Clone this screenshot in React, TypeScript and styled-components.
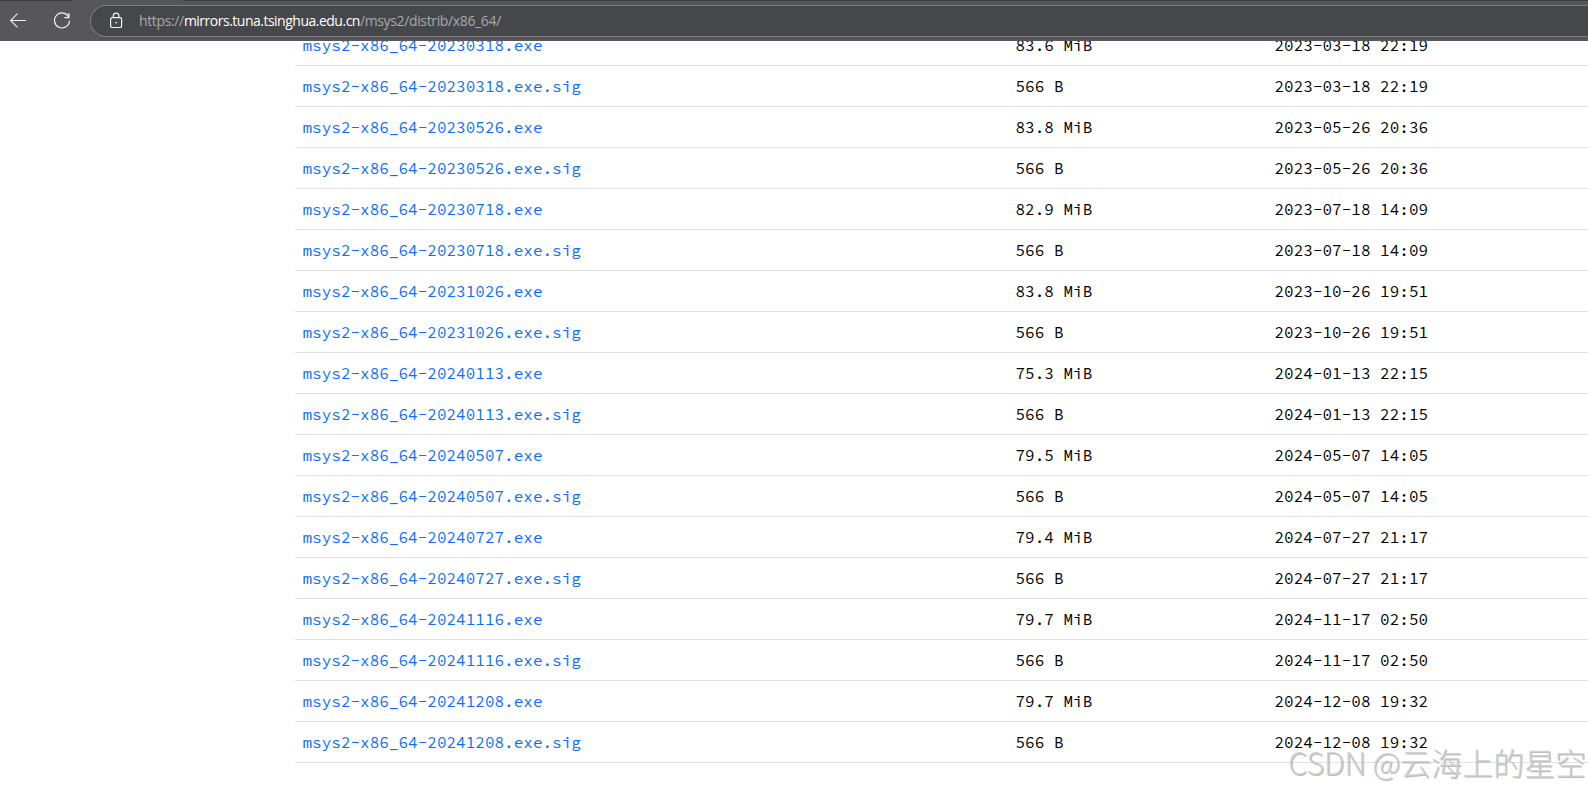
import React from 'react';
import styled, { createGlobalStyle } from 'styled-components';

const GlobalStyle = createGlobalStyle`
  * { box-sizing: border-box; }
  html, body { margin: 0; padding: 0; background: #fff; }
`;

const Browser = styled.div`
  display: flex;
  flex-direction: column;
  position: relative;
  width: 100%;
  height: 792px;
  overflow: hidden;
  background: #fff;
`;

const TabEdge = styled.div`
  flex: none;
  display: flex;
  height: 1px;
  background: #3b3b40;
`;

const ActiveTab = styled.div`
  width: 111px;
  margin-left: 72px;
  background: #56565b;
`;

const Toolbar = styled.header`
  flex: none;
  display: flex;
  align-items: flex-start;
  height: 40px;
  padding-top: 4px;
  background: #56565b;
  color: #f2f2f2;
`;

const ToolButton = styled.span<{ $left: number }>`
  display: flex;
  width: 18px;
  height: 32px;
  align-items: center;
  margin-left: ${(p) => p.$left}px;
`;

const AddressBar = styled.div`
  flex: 1;
  display: flex;
  align-items: center;
  height: 32px;
  margin-left: 18px;
  padding-left: 16px;
  border: 1px solid #7c7c80;
  border-right: 0;
  border-radius: 16px 0 0 16px;
  background: #46474b;
`;

const Url = styled.span`
  margin-left: 16px;
  font: 14px/20px 'Segoe UI', 'Open Sans', 'Noto Sans', sans-serif;
  letter-spacing: -0.36px;
  white-space: nowrap;
  color: #a9a9ab;
`;

const Host = styled.span`
  letter-spacing: -0.5px;
  color: #fff;
`;

const Page = styled.main`
  flex: 1;
  min-height: 0;
  overflow: hidden;
  padding-left: 295px;
`;

const FileList = styled.div`
  margin-top: -16px;
`;

const FileRow = styled.div`
  display: grid;
  grid-template-columns: 713px 259px 1fr;
  height: 41px;
  border-bottom: 1px solid #dee2e6;
  font: 16px/24px 'Source Code Pro', 'Liberation Mono', monospace;
  color: #000;
`;

const Cell = styled.span`
  padding: 8px 8px 8px 7.5px;
  white-space: pre;
`;

const FileLink = styled.a`
  color: #0d6efd;
  text-decoration: none;
`;

const Watermark = styled.div`
  position: absolute;
  right: 2px;
  bottom: 8px;
  font: 300 31px/44px 'Noto Sans CJK SC', sans-serif;
  white-space: nowrap;
  color: rgba(205, 205, 205, 0.85);
  text-shadow: 1px 1px 0 rgba(145, 145, 145, 0.6);
`;

const WatermarkSite = styled.span`
  letter-spacing: -0.4px;
`;

const releases = [
  ['20230318', '83.6 MiB', '2023-03-18 22:19'],
  ['20230526', '83.8 MiB', '2023-05-26 20:36'],
  ['20230718', '82.9 MiB', '2023-07-18 14:09'],
  ['20231026', '83.8 MiB', '2023-10-26 19:51'],
  ['20240113', '75.3 MiB', '2024-01-13 22:15'],
  ['20240507', '79.5 MiB', '2024-05-07 14:05'],
  ['20240727', '79.4 MiB', '2024-07-27 21:17'],
  ['20241116', '79.7 MiB', '2024-11-17 02:50'],
  ['20241208', '79.7 MiB', '2024-12-08 19:32'],
];

const files = releases.flatMap(([version, size, date]) => [
  { name: `msys2-x86_64-${version}.exe`, size, date },
  { name: `msys2-x86_64-${version}.exe.sig`, size: '566 B', date },
]);

const BackIcon = () => (
  <svg width="18" height="18" viewBox="0 0 18 18" fill="none" stroke="currentColor" strokeWidth="1.1">
    <path d="M17 8.5H1.4M8.5 1.7L1.6 8.5l6.9 6.8" />
  </svg>
);

const ReloadIcon = () => (
  <svg width="18" height="18" viewBox="0 0 18 18" fill="none" stroke="currentColor" strokeWidth="1.2">
    <path d="M14.9 5.5A7.5 7.5 0 1 0 15.5 8.8M14.9 1v4.6h-4.6" />
  </svg>
);

const LockIcon = () => (
  <svg width="16" height="18" viewBox="0 0 16 18" fill="none" stroke="#f2f2f2" strokeWidth="1.2">
    <rect x="3.6" y="5.7" width="11" height="9.8" rx="1.6" />
    <path d="M6.3 5.7V3.9a2.8 2.8 0 0 1 5.6 0v1.8" />
    <circle cx="9.1" cy="10.6" r="0.9" fill="#f2f2f2" stroke="none" />
  </svg>
);

export default function App() {
  return (
    <>
      <GlobalStyle />
      <Browser>
        <TabEdge>
          <ActiveTab />
        </TabEdge>
        <Toolbar>
          <ToolButton $left={9}>
            <BackIcon />
          </ToolButton>
          <ToolButton $left={27}>
            <ReloadIcon />
          </ToolButton>
          <AddressBar>
            <LockIcon />
            <Url>
              https://<Host>mirrors.tuna.tsinghua.edu.cn</Host>/msys2/distrib/x86_64/
            </Url>
          </AddressBar>
        </Toolbar>
        <Page>
          <FileList>
            {files.map((file) => (
              <FileRow key={file.name}>
                <Cell>
                  <FileLink href="#">{file.name}</FileLink>
                </Cell>
                <Cell>{file.size}</Cell>
                <Cell>{file.date}</Cell>
              </FileRow>
            ))}
          </FileList>
        </Page>
        <Watermark>
          <WatermarkSite>CSDN @</WatermarkSite>云海上的星空
        </Watermark>
      </Browser>
    </>
  );
}
